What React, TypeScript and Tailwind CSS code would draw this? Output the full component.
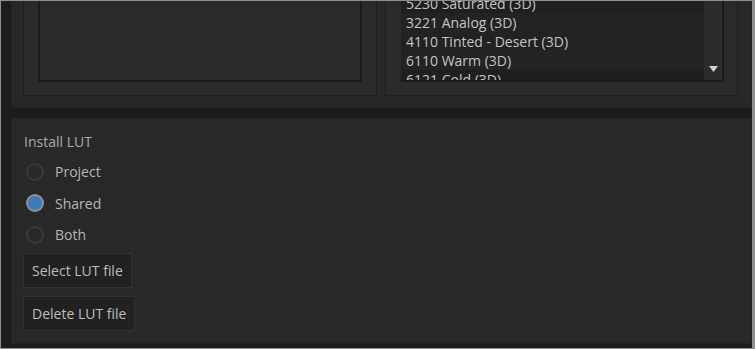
import { useState } from "react";

const luts = [
  "5230 Saturated (3D)",
  "3221 Analog (3D)",
  "4110 Tinted - Desert (3D)",
  "6110 Warm (3D)",
  "6121 Cold (3D)",
];

const rowBg = ["bg-[#1f1f1f]", "bg-[#232323]", "bg-[#222222]", "bg-[#232323]", "bg-[#1f1f1f]"];

const options = ["Project", "Shared", "Both"];

export default function App() {
  const [target, setTarget] = useState("Shared");

  return (
    <div
      className="w-[755px] h-[349px] overflow-hidden bg-[#1c1c1c] border-t border-l border-b border-r-[3px] border-[#8e8e8e] pl-[10px] flex flex-col"
      style={{ fontFamily: '"Open Sans", "Noto Sans", sans-serif' }}
    >
      {/* Top panel (cropped at the top) */}
      <div className="-mt-[30px] h-[137px] shrink-0 bg-[#272727] border border-t-0 border-[#222222] flex gap-[8px] pl-[11px] pr-[13px] pb-[11px]">
        {/* Preview box */}
        <div className="w-[354px] bg-[#2a2a2a] border border-t-0 border-[#1e1e1e] px-[14px] pb-[13px] flex">
          <div className="flex-1 border-2 border-t-0 border-[#1b1b1b] bg-[#2a2a2a]" />
        </div>

        {/* LUT list box */}
        <div className="flex-1 bg-[#2a2a2a] border border-t-0 border-[#1e1e1e] pl-[15px] pr-[13px] pb-[13px] flex">
          <div className="flex-1 flex bg-[#1f1f1f] border-r-2 border-b-2 border-[#1a1a1a]">
            <div className="flex-1 flex flex-col justify-end overflow-hidden">
              {luts.map((name, i) => (
                <div
                  key={name}
                  className={`h-[19px] shrink-0 flex items-center pl-[5px] text-[14px] leading-none text-[#c4c4c4] ${rowBg[i]} ${
                    i === luts.length - 1 ? "-mb-[9px]" : ""
                  }`}
                >
                  {name}
                </div>
              ))}
            </div>
            <div className="w-[18px] bg-[#2c2c2c] flex flex-col justify-end items-center pb-[8px]">
              <svg width="9" height="6" viewBox="0 0 9 6">
                <path d="M0 0 H9 L4.5 6 Z" fill="#d2d2d2" />
              </svg>
            </div>
          </div>
        </div>
      </div>

      {/* Install LUT panel */}
      <div className="mt-[10px] h-[226px] shrink-0 bg-[#282828] border border-[#222222] pl-[12px] pt-[13px] flex flex-col">
        <div className="h-[18px] flex items-center text-[14px] text-[#a9a9a9]">Install LUT</div>

        <div className="mt-[6px] flex flex-col">
          {options.map((opt) => {
            const on = target === opt;
            return (
              <button
                key={opt}
                onClick={() => setTarget(opt)}
                className="h-[31.5px] flex items-center gap-[11px] text-left"
              >
                <span
                  className={`ml-[2px] w-[18px] h-[18px] rounded-full flex items-center justify-center ${
                    on ? "bg-[#8f8f8f]" : "border-2 border-[#3a3a3a]"
                  }`}
                >
                  {on && <span className="w-[14px] h-[14px] rounded-full bg-[#3d7bbf]" />}
                </span>
                <span className="text-[14px] text-[#b6b6b6]">{opt}</span>
              </button>
            );
          })}
        </div>

        <div className="mt-[2px] flex flex-col items-start gap-[8px]">
          <button className="-ml-[1px] h-[35px] px-[8px] bg-[#212121] border border-[#323232] text-[14px] text-[#bdbdbd]">
            Select LUT file
          </button>
          <button className="-ml-[1px] h-[35px] px-[8px] bg-[#212121] border border-[#323232] text-[14px] text-[#bdbdbd]">
            Delete LUT file
          </button>
        </div>
      </div>
    </div>
  );
}
